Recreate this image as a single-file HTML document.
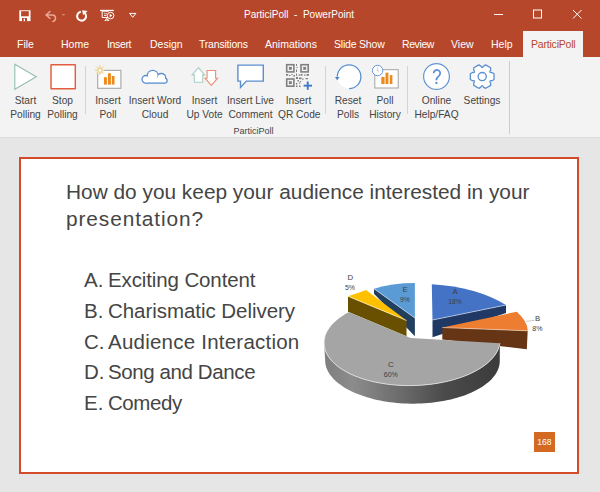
<!DOCTYPE html>
<html><head><meta charset="utf-8">
<style>
*{margin:0;padding:0;box-sizing:border-box}
html,body{width:600px;height:492px;overflow:hidden;background:#e6e6e6;font-family:"Liberation Sans",sans-serif}
.abs{position:absolute}
#hdr{position:absolute;left:0;top:0;width:600px;height:57px;background:#b7472a}
.w{color:#fff;font-size:10.5px;line-height:12px;white-space:nowrap;position:absolute}
#rib{position:absolute;left:0;top:57px;width:600px;height:81px;background:#f3f3f3;border-bottom:1px solid #dadada}
.rl{position:absolute;color:#444;font-size:10.2px;line-height:14px;text-align:center;white-space:nowrap}
.sep{position:absolute;width:1px;background:#d4d4d4}
#slide{position:absolute;left:19px;top:157px;width:560px;height:317px;background:#fff;border:2px solid #d44b2b}
.st{position:absolute;color:#454545;white-space:nowrap;font-size:20.5px}
</style></head><body>
<div id="hdr">
  <div class="w" style="left:244px;top:9px;font-size:10px">ParticiPoll &nbsp;- &nbsp;PowerPoint</div>
  <div class="w" style="left:17px;top:38px">File</div>
  <div class="w" style="left:61px;top:38px">Home</div>
  <div class="w" style="left:107px;top:38px;letter-spacing:-0.35px">Insert</div>
  <div class="w" style="left:150px;top:38px">Design</div>
  <div class="w" style="left:199px;top:38px;letter-spacing:-0.2px">Transitions</div>
  <div class="w" style="left:265px;top:38px">Animations</div>
  <div class="w" style="left:334px;top:38px;letter-spacing:-0.2px">Slide Show</div>
  <div class="w" style="left:402px;top:38px;letter-spacing:-0.4px">Review</div>
  <div class="w" style="left:451px;top:38px">View</div>
  <div class="w" style="left:491px;top:38px">Help</div>
  <div class="abs" style="left:523px;top:31px;width:60px;height:27px;background:#f3f3f3"></div>
  <div class="w" style="left:531px;top:38px;color:#b7472a;letter-spacing:-0.2px">ParticiPoll</div>
</div>
<div id="rib">
  <div class="rl" style="left:10px;top:37px;width:31px">Start<br>Polling</div>
  <div class="rl" style="left:47px;top:37px;width:31px">Stop<br>Polling</div>
  <div class="rl" style="left:93px;top:37px;width:30px">Insert<br>Poll</div>
  <div class="rl" style="left:128px;top:37px;width:54px">Insert Word<br>Cloud</div>
  <div class="rl" style="left:186px;top:37px;width:37px">Insert<br>Up Vote</div>
  <div class="rl" style="left:227px;top:37px;width:47px">Insert Live<br>Comment</div>
  <div class="rl" style="left:278px;top:37px;width:41px">Insert<br>QR Code</div>
  <div class="rl" style="left:333px;top:37px;width:30px">Reset<br>Polls</div>
  <div class="rl" style="left:368px;top:37px;width:34px">Poll<br>History</div>
  <div class="rl" style="left:413px;top:37px;width:47px">Online<br>Help/FAQ</div>
  <div class="rl" style="left:463px;top:37px;width:38px">Settings</div>
  <div class="rl" style="left:230px;top:69px;width:47px;font-size:9px;line-height:11px">ParticiPoll</div>
  <div class="sep" style="left:85px;top:9px;height:48px"></div>
  <div class="sep" style="left:325px;top:9px;height:48px"></div>
  <div class="sep" style="left:407px;top:9px;height:48px"></div>
  <div class="sep" style="left:509px;top:4px;height:73px;background:#cdcdcd"></div>
</div>
<div id="slide">
  <div class="st" style="left:45px;top:19px;line-height:27px;font-size:20.85px">How do you keep your audience interested in your</div>
  <div class="st" style="left:45px;top:46px;line-height:27px;font-size:20.85px;letter-spacing:0.9px">presentation?</div>
  <div class="st" style="left:63px;top:106.0px;line-height:30.8px">A.</div>
  <div class="st" style="left:87px;top:106.0px;line-height:30.8px;letter-spacing:-0.12px">Exciting Content</div>
  <div class="st" style="left:63px;top:136.8px;line-height:30.8px">B.</div>
  <div class="st" style="left:87px;top:136.8px;line-height:30.8px;letter-spacing:-0.05px">Charismatic Delivery</div>
  <div class="st" style="left:63px;top:167.6px;line-height:30.8px">C.</div>
  <div class="st" style="left:87px;top:167.6px;line-height:30.8px;letter-spacing:0.23px">Audience Interaction</div>
  <div class="st" style="left:63px;top:198.4px;line-height:30.8px">D.</div>
  <div class="st" style="left:87px;top:198.4px;line-height:30.8px;letter-spacing:-0.4px">Song and Dance</div>
  <div class="st" style="left:63px;top:229.2px;line-height:30.8px">E.</div>
  <div class="st" style="left:87px;top:229.2px;line-height:30.8px;letter-spacing:-0.43px">Comedy</div>
  <div class="abs" style="left:512.6px;top:272.6px;width:21.4px;height:20px;background:#d46a22;color:#fff;font-size:8.5px;line-height:21px;text-align:center">168</div>
</div>
<!--ICONS-->
<svg class="abs" style="left:0;top:0" width="600" height="140" viewBox="0 0 600 140">
<rect x="19.3" y="10.3" width="11.2" height="10.8" fill="#fff"/>
<rect x="21.1" y="11.2" width="7.7" height="5.1" fill="#b7472a"/>
<rect x="22" y="18" width="5" height="3.1" fill="#b7472a"/>
<rect x="23.7" y="18.7" width="1.3" height="2.4" fill="#fff"/>
<path d="M46,15 L50,11.5 M46,15 L50,18.3 M46,15 H53 A3.3,3.3 0 0 1 53,21.4" fill="none" stroke="#e6a896" stroke-width="1.5" stroke-linecap="round"/>
<path d="M61.5,14 h4 l-2,1.8 z" fill="#d88a72"/>
<path d="M80.82,11.67 A4.5,4.5 0 1 0 84.78,12.92" fill="none" stroke="#fff" stroke-width="2"/>
<path d="M82.1,10.3 L87.6,11 L83.1,15 Z" fill="#fff"/>
<rect x="100" y="9.8" width="13.8" height="1.3" fill="#fff"/>
<path d="M102.2,11.1 v6.4 h6" fill="none" stroke="#fff" stroke-width="1"/>
<path d="M102.2,11.6 h6.5" fill="none" stroke="#fff" stroke-width="0.8"/>
<circle cx="110.6" cy="15.6" r="3.3" fill="#b7472a" stroke="#fff" stroke-width="1"/>
<path d="M109.7,13.8 l2.6,1.8 l-2.6,1.8 z" fill="#fff"/>
<path d="M104,13.8 h3 M104,15.5 h2.5" stroke="#fff" stroke-width="0.8"/>
<path d="M106.8,17.7 l-2.5,3.4 h5.3 z" fill="#fff"/>
<path d="M106.8,19.2 l-1,1.3 h2 z" fill="#b7472a"/>
<path d="M129.6,13.4 H135.9 L132.75,17.3 Z" fill="none" stroke="#fff" stroke-width="1"/>
<rect x="494" y="14" width="9" height="1" fill="#fff"/>
<rect x="533.5" y="10" width="8" height="8" fill="none" stroke="#fff" stroke-width="1"/>
<path d="M573,10 L581.5,18.5 M581.5,10 L573,18.5" stroke="#fff" stroke-width="1"/>
<path d="M14.8,64.3 L36.3,76.8 L14.8,89.2 Z" fill="#fff" stroke="#93bdaf" stroke-width="1.1" stroke-linejoin="miter"/>
<rect x="51" y="64.8" width="24.3" height="24" rx="0.2" fill="#fff" stroke="#e35e40" stroke-width="1.45"/>
<rect x="97.7" y="70.4" width="23.2" height="17.9" fill="#fff" stroke="#a8a8a8" stroke-width="1.15"/>
<rect x="103.9" y="77.2" width="3.00" height="7.40" fill="#ee8a1d"/>
<rect x="107.9" y="73.3" width="3.00" height="11.30" fill="#ee8a1d"/>
<rect x="111.8" y="76.0" width="2.70" height="8.60" fill="#ee8a1d"/>
<circle cx="99.9" cy="70.2" r="4" fill="#f3f3f3"/>
<line x1="102.50" y1="70.20" x2="104.90" y2="70.20" stroke="#eccb7c" stroke-width="1"/>
<line x1="101.74" y1="72.04" x2="103.44" y2="73.74" stroke="#eccb7c" stroke-width="1"/>
<line x1="99.90" y1="72.80" x2="99.90" y2="75.20" stroke="#eccb7c" stroke-width="1"/>
<line x1="98.06" y1="72.04" x2="96.36" y2="73.74" stroke="#eccb7c" stroke-width="1"/>
<line x1="97.30" y1="70.20" x2="94.90" y2="70.20" stroke="#eccb7c" stroke-width="1"/>
<line x1="98.06" y1="68.36" x2="96.36" y2="66.66" stroke="#eccb7c" stroke-width="1"/>
<line x1="99.90" y1="67.60" x2="99.90" y2="65.20" stroke="#eccb7c" stroke-width="1"/>
<line x1="101.74" y1="68.36" x2="103.44" y2="66.66" stroke="#eccb7c" stroke-width="1"/>
<circle cx="99.9" cy="70.2" r="2.1" fill="#fff" stroke="#eccb7c" stroke-width="1.1"/>
<circle cx="145.9" cy="79.3" r="4.45" fill="#5a8fd0"/><circle cx="152.7" cy="75.8" r="6.15" fill="#5a8fd0"/><circle cx="161.3" cy="77.9" r="5.05" fill="#5a8fd0"/><circle cx="164.6" cy="80.6" r="3.15" fill="#5a8fd0"/><rect x="145.9" y="77.90" width="18.7" height="5.85" fill="#5a8fd0"/>
<circle cx="145.9" cy="79.3" r="3.15" fill="#fff"/><circle cx="152.7" cy="75.8" r="4.85" fill="#fff"/><circle cx="161.3" cy="77.9" r="3.75" fill="#fff"/><circle cx="164.6" cy="80.6" r="1.85" fill="#fff"/><rect x="145.9" y="77.90" width="18.7" height="4.55" fill="#fff"/>
<path d="M198.4,67.7 L204.6,74.9 L202.7,74.9 L202.7,82.2 L194.3,82.2 L194.3,74.9 L192.1,74.9 Z" fill="#fff" stroke="#a8cfc2" stroke-width="1.1"/>
<path d="M207.1,70.5 L215.6,70.5 L215.6,78.2 L217.6,78.2 L211.3,85.3 L205,78.2 L207.1,78.2 Z" fill="#fff" stroke="#ea9078" stroke-width="1.1"/>
<path d="M237.9,65.1 H263.3 V81.1 H246.4 L240.5,87.4 V81.1 H237.9 Z" fill="#fff" stroke="#5a8fd0" stroke-width="1.4" stroke-linejoin="miter"/>
<rect x="286.70" y="64.70" width="7.2" height="7.2" fill="none" stroke="#808080" stroke-width="1.6"/><rect x="288.90" y="66.90" width="2.9" height="2.9" fill="#808080"/>
<rect x="301.00" y="64.70" width="7.2" height="7.2" fill="none" stroke="#808080" stroke-width="1.6"/><rect x="303.20" y="66.90" width="2.9" height="2.9" fill="#808080"/>
<rect x="286.70" y="79.00" width="7.2" height="7.2" fill="none" stroke="#808080" stroke-width="1.6"/><rect x="288.90" y="81.20" width="2.9" height="2.9" fill="#808080"/>
<rect x="296" y="64" width="1" height="2" fill="#808080"/>
<rect x="296.5" y="67" width="1.2" height="1" fill="#808080"/>
<rect x="296" y="69.5" width="1" height="2.5" fill="#808080"/>
<rect x="286" y="74" width="2.2" height="1.7" fill="#808080"/>
<rect x="289" y="75" width="1.5" height="1" fill="#808080"/>
<rect x="291.5" y="74" width="1.2" height="1.2" fill="#808080"/>
<rect x="293.5" y="75" width="1.5" height="1.7" fill="#808080"/>
<rect x="296" y="73.5" width="1" height="2.3" fill="#808080"/>
<rect x="298.5" y="74.5" width="1.5" height="1.2" fill="#808080"/>
<rect x="300.5" y="74" width="2" height="1.7" fill="#808080"/>
<rect x="304" y="74.5" width="1.5" height="1.2" fill="#808080"/>
<rect x="306.5" y="74" width="2.5" height="1.7" fill="#808080"/>
<rect x="296" y="77" width="2" height="2" fill="#808080"/>
<rect x="299" y="77.5" width="2.5" height="1.7" fill="#808080"/>
<rect x="302" y="78.5" width="1.5" height="1.2" fill="#808080"/>
<rect x="297.5" y="80" width="1.5" height="1.5" fill="#808080"/>
<rect x="300" y="81" width="1.2" height="1.2" fill="#808080"/>
<rect x="305.5" y="78" width="2.5" height="1.2" fill="#808080"/>
<rect x="296" y="83" width="1.3" height="1.5" fill="#808080"/>
<rect x="299" y="82.5" width="1.2" height="1.2" fill="#808080"/>
<rect x="296" y="85.5" width="1.5" height="1.5" fill="#808080"/>
<rect x="299" y="85.5" width="1.5" height="1.5" fill="#808080"/>
<rect x="303.6" y="84.7" width="8.4" height="1.9" fill="#3f7ac6"/>
<rect x="306.8" y="81.5" width="1.9" height="8.3" fill="#3f7ac6"/>
<circle cx="349.1" cy="76.75" r="11.8" fill="#fff"/>
<path d="M349.1,88.55 A11.8,11.8 0 1 0 337.3,76.75" fill="none" stroke="#5a8fd0" stroke-width="1.3"/>
<path d="M335,76.9 L339.5,76.9 L337.25,80.2 Z" fill="#4a82c6"/>
<rect x="374.8" y="69.7" width="23.4" height="18.3" fill="#fff" stroke="#a3a3a3" stroke-width="1"/>
<rect x="381.3" y="76.9" width="3.30" height="7.10" fill="#ee8a1d"/>
<rect x="385.5" y="72.7" width="2.90" height="11.30" fill="#ee8a1d"/>
<rect x="389.8" y="75.1" width="2.60" height="8.90" fill="#ee8a1d"/>
<circle cx="377.6" cy="70.5" r="5.2" fill="#fff" stroke="#6797d2" stroke-width="1"/>
<path d="M377.3,67.5 V71 H379.3" fill="none" stroke="#bdbdbd" stroke-width="0.8"/>
<circle cx="436.5" cy="76.5" r="12.9" fill="#fff" stroke="#6296d3" stroke-width="1.2"/>
<path d="M433.6,73.3 A3.3,3.3 0 1 1 438.9,75.9 C437.3,77.1 436.4,77.8 436.4,80.3" fill="none" stroke="#5a8fd0" stroke-width="1.7"/>
<circle cx="436.4" cy="83" r="1.15" fill="#5a8fd0"/>
<path d="M494.05,73.70 L494.05,79.50 L491.96,80.73 Q488.61,80.30 490.66,82.99 L490.64,85.41 L485.61,88.31 L483.51,87.12 Q482.20,84.00 480.89,87.12 L478.79,88.31 L473.76,85.41 L473.74,82.99 Q475.79,80.30 472.44,80.73 L470.35,79.50 L470.35,73.70 L472.44,72.47 Q475.79,72.90 473.74,70.21 L473.76,67.79 L478.79,64.89 L480.89,66.08 Q482.20,69.20 483.51,66.08 L485.61,64.89 L490.64,67.79 L490.66,70.21 Q488.61,72.90 491.96,72.47 Z" fill="#fff" stroke="#5a8fd0" stroke-width="1.3" stroke-linejoin="round"/>
<circle cx="482.2" cy="76.6" r="4.1" fill="#fff" stroke="#5a8fd0" stroke-width="1.3"/>
</svg>
<!--/ICONS-->
<!--PIE-->
<svg class="abs" style="left:0;top:0" width="600" height="492" viewBox="0 0 600 492">
<defs><linearGradient id="gs" x1="322" y1="0" x2="501" y2="0" gradientUnits="userSpaceOnUse"><stop offset="0" stop-color="#7d7d7d"/><stop offset="0.17" stop-color="#8c8c8c"/><stop offset="0.45" stop-color="#6a6a6a"/><stop offset="0.68" stop-color="#4b4b4b"/><stop offset="1" stop-color="#3b3b3b"/></linearGradient></defs>
<polygon points="374,288.7 414.9,318 414.9,336.2 374,293.7" fill="#223f5e"/>
<path d="M374,288.7 Q392,283 414.9,283 L414.9,318 Z" fill="#5b9bd5"/>
<line x1="374" y1="288.7" x2="414.9" y2="318" stroke="#cfdcea" stroke-width="0.7"/>
<polygon points="348,296.3 406.5,320.5 406.5,336.3 348,311.7" fill="#685000"/>
<path d="M348,296.3 Q357,293.5 366,290 L406.5,320.5 Z" fill="#ffc000"/>
<line x1="348" y1="296.3" x2="406.5" y2="320.5" stroke="#fff2c8" stroke-width="0.7"/>
<polygon points="432.5,320 506,305 506,313 432.5,337.3" fill="#1f3864"/>
<path d="M431.8,284.2 Q477,287 506,305 L432.5,320 Z" fill="#4472c4"/>
<line x1="432.5" y1="320" x2="506" y2="305" stroke="#d0d8ea" stroke-width="0.7"/>
<polygon points="442.3,327.5 527.7,330.8 526.8,349.2 442.3,339.5" fill="#653515"/>
<path d="M442.3,327.5 L516.8,311.7 Q528,322 527.7,330.8 Z" fill="#ed7d31"/>
<line x1="442.3" y1="327.5" x2="527.7" y2="330.8" stroke="#f6d2bb" stroke-width="0.7"/>
<line x1="526" y1="321.3" x2="534.5" y2="320.4" stroke="#bfbfbf" stroke-width="0.8"/>
<polygon points="499.82,343.20 499.53,344.90 499.10,346.60 498.55,348.28 497.86,349.96 497.04,351.63 496.10,353.28 495.03,354.91 493.84,356.53 492.52,358.12 491.08,359.69 489.52,361.23 487.85,362.74 486.06,364.21 484.16,365.66 482.16,367.07 480.04,368.44 477.83,369.77 475.51,371.05 473.10,372.30 470.60,373.49 468.01,374.64 465.34,375.74 462.59,376.79 459.76,377.79 456.86,378.73 453.89,379.61 450.86,380.44 447.77,381.21 444.62,381.92 441.43,382.57 438.20,383.16 434.92,383.68 431.61,384.15 428.27,384.55 424.91,384.88 421.52,385.15 418.13,385.35 414.72,385.49 411.31,385.56 407.90,385.57 404.50,385.51 401.11,385.38 397.73,385.19 394.38,384.93 391.05,384.61 387.76,384.22 384.50,383.77 381.28,383.25 378.11,382.68 374.99,382.04 371.93,381.34 368.93,380.58 365.99,379.76 363.12,378.88 360.32,377.95 357.61,376.97 354.97,375.93 352.42,374.84 349.96,373.70 347.60,372.51 345.33,371.27 343.16,369.99 341.09,368.67 339.13,367.31 337.29,365.90 335.55,364.47 333.93,362.99 332.43,361.49 331.04,359.95 329.78,358.39 328.64,356.80 327.63,355.19 326.74,353.56 325.99,351.92 325.36,350.25 324.86,348.57 324.50,346.89 324.26,345.19 324.16,343.49 325.17,360.42 325.24,362.13 325.44,363.83 325.78,365.54 326.25,367.23 326.87,368.92 327.61,370.59 328.50,372.24 329.51,373.88 330.66,375.50 331.94,377.09 333.34,378.66 334.87,380.20 336.52,381.70 338.29,383.18 340.18,384.62 342.19,386.02 344.30,387.38 346.52,388.70 348.85,389.97 351.28,391.20 353.81,392.38 356.42,393.51 359.13,394.59 361.92,395.62 364.79,396.59 367.74,397.50 370.76,398.35 373.84,399.15 376.98,399.88 380.19,400.55 383.44,401.16 386.74,401.71 390.07,402.19 393.45,402.60 396.85,402.95 400.28,403.23 403.73,403.45 407.19,403.59 410.66,403.67 414.14,403.68 417.61,403.62 421.07,403.50 424.52,403.30 427.95,403.04 431.35,402.72 434.73,402.32 438.07,401.86 441.37,401.34 444.62,400.75 447.83,400.10 450.97,399.38 454.06,398.60 457.08,397.77 460.03,396.87 462.90,395.92 465.70,394.91 468.41,393.85 471.03,392.74 473.56,391.57 475.99,390.36 478.33,389.10 480.55,387.79 482.67,386.44 484.68,385.05 486.58,383.62 488.35,382.16 490.01,380.66 491.55,379.13 492.96,377.57 494.24,375.99 495.39,374.38 496.41,372.75 497.30,371.10 498.05,369.43 498.67,367.75 499.16,366.06 499.50,364.36 499.71,362.65 499.78,360.94" fill="url(#gs)"/>
<polygon points="348.50,312.10 410.50,338.00 499.90,343.20 499.82,343.20 499.59,344.61 499.26,346.03 498.84,347.44 498.34,348.84 497.74,350.23 497.05,351.62 496.28,352.99 495.41,354.36 494.46,355.71 493.43,357.04 492.31,358.36 491.10,359.66 489.82,360.95 488.45,362.21 487.00,363.45 485.48,364.67 483.88,365.87 482.20,367.04 480.45,368.18 478.63,369.30 476.74,370.38 474.78,371.44 472.76,372.47 470.68,373.46 468.53,374.42 466.33,375.35 464.06,376.24 461.75,377.09 459.38,377.91 456.96,378.69 454.50,379.44 451.99,380.14 449.44,380.80 446.86,381.42 444.23,382.00 441.57,382.54 438.88,383.04 436.17,383.49 433.43,383.90 430.66,384.27 427.88,384.59 425.08,384.86 422.27,385.09 419.44,385.28 416.61,385.42 413.78,385.52 410.94,385.56 408.10,385.57 405.27,385.53 402.44,385.44 399.63,385.30 396.83,385.12 394.04,384.90 391.27,384.63 388.53,384.32 385.80,383.96 383.11,383.55 380.45,383.11 377.81,382.62 375.22,382.09 372.66,381.51 370.15,380.90 367.67,380.24 365.25,379.54 362.87,378.80 360.55,378.03 358.27,377.22 356.06,376.37 353.90,375.48 351.80,374.56 349.77,373.60 347.80,372.61 345.90,371.59 344.06,370.54 342.30,369.46 340.61,368.34 339.00,367.21 337.46,366.04 335.99,364.85 334.61,363.63 333.31,362.39 332.09,361.13 330.95,359.85 329.90,358.55 328.94,357.24 328.06,355.90 327.27,354.55 326.56,353.19 325.95,351.82 325.42,350.43 324.99,349.04 324.64,347.64 324.39,346.23 324.23,344.82 324.16,343.41 324.18,341.99 324.29,340.57 324.50,339.15 324.80,337.74 325.18,336.33 325.66,334.93 326.23,333.53 326.88,332.14 327.63,330.76 328.46,329.39 329.38,328.04 330.39,326.70 331.48,325.37 332.66,324.06 333.92,322.77 335.26,321.50 336.68,320.25 338.17,319.03 339.75,317.82 341.40,316.65 343.13,315.49 344.92,314.37 346.79,313.27 348.72,312.20" fill="#a5a5a5"/>
<polyline points="499.82,343.20 499.51,344.98 499.05,346.76 498.45,348.53 497.71,350.29 496.82,352.04 495.80,353.76 494.64,355.47 493.34,357.15 491.90,358.81 490.33,360.44 488.64,362.04 486.81,363.61 484.87,365.14 482.80,366.63 480.61,368.08 478.32,369.48 475.91,370.84 473.40,372.15 470.78,373.41 468.07,374.62 465.26,375.77 462.37,376.87 459.40,377.91 456.34,378.89 453.22,379.80 450.02,380.66 446.76,381.45 443.45,382.17 440.08,382.82 436.67,383.41 433.21,383.93 429.72,384.38 426.20,384.76 422.66,385.06 419.10,385.30 415.53,385.46 411.95,385.55 408.38,385.57 404.81,385.51 401.25,385.39 397.71,385.19 394.19,384.91 390.71,384.57 387.25,384.15 383.84,383.67 380.48,383.11 377.17,382.49 373.92,381.80 370.73,381.04 367.60,380.22 364.55,379.33 361.59,378.38 358.70,377.37 355.90,376.30 353.20,375.18 350.59,374.00 348.08,372.76 345.68,371.47 343.40,370.14 341.22,368.75 339.16,367.33 337.22,365.85 335.41,364.34 333.72,362.79 332.16,361.21 330.74,359.60 329.45,357.95 328.30,356.28 327.28,354.58 326.41,352.86 325.67,351.13 325.08,349.37 324.64,347.61 324.34,345.83 324.18,344.05 324.17,342.26 324.31,340.48 324.59,338.69 325.01,336.91" fill="none" stroke="#e6e6e6" stroke-width="0.8"/>
<text x="455" y="293.75" text-anchor="middle" style="font-family:Liberation Sans;font-size:7.8px;fill:#404040">A</text>
<text x="455" y="304.25" text-anchor="middle" textLength="13.5" lengthAdjust="spacingAndGlyphs" style="font-family:Liberation Sans;font-size:7.8px;fill:#404040">18%</text>
<text x="537.5" y="320.8" text-anchor="middle" style="font-family:Liberation Sans;font-size:7.8px;fill:#404040">B</text>
<text x="537.4" y="331.25" text-anchor="middle" textLength="10.2" lengthAdjust="spacingAndGlyphs" style="font-family:Liberation Sans;font-size:7.8px;fill:#404040">8%</text>
<text x="390.75" y="367" text-anchor="middle" style="font-family:Liberation Sans;font-size:7.8px;fill:#404040">C</text>
<text x="390.75" y="376.9" text-anchor="middle" textLength="14" lengthAdjust="spacingAndGlyphs" style="font-family:Liberation Sans;font-size:7.8px;fill:#404040">60%</text>
<text x="350.3" y="279.7" text-anchor="middle" style="font-family:Liberation Sans;font-size:7.8px;fill:#404040">D</text>
<text x="350" y="289.6" text-anchor="middle" textLength="10" lengthAdjust="spacingAndGlyphs" style="font-family:Liberation Sans;font-size:7.8px;fill:#404040">5%</text>
<text x="405" y="291.7" text-anchor="middle" style="font-family:Liberation Sans;font-size:7.8px;fill:#404040">E</text>
<text x="405" y="302.3" text-anchor="middle" textLength="10" lengthAdjust="spacingAndGlyphs" style="font-family:Liberation Sans;font-size:7.8px;fill:#404040">9%</text>
</svg>
<!--/PIE-->
</body></html>
